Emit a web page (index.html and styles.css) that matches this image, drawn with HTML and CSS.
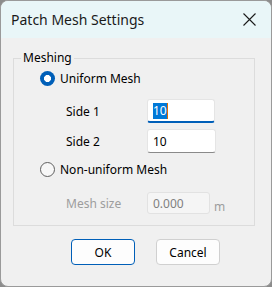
FILE: index.html
```html
<!DOCTYPE html>
<html lang="en">
<head>
    <meta charset="UTF-8">
    <title>Patch Mesh Settings</title>
    <link rel="stylesheet" href="styles.css">
</head>
<body>

<div class="window">
    <div class="titlebar">
        <span class="title">Patch Mesh Settings</span>
        <svg class="close" width="13" height="13" viewBox="0 0 13 13">
            <path d="M0.5 0.5 L12.5 12.5 M12.5 0.5 L0.5 12.5" stroke="#1b1b1b" stroke-width="1.1" fill="none"/>
        </svg>
    </div>

    <div class="content">
        <fieldset class="group">
            <legend>Meshing</legend>

            <div class="radio-row">
                <span class="radio checked"></span>
                <span class="radio-label">Uniform Mesh</span>
            </div>

            <div class="field-row first">
                <span class="field-label">Side 1</span>
                <div class="input focused"><span class="selected">10</span><span class="caret"></span></div>
            </div>

            <div class="field-row">
                <span class="field-label">Side 2</span>
                <div class="input">10</div>
            </div>

            <div class="radio-row second">
                <span class="radio"></span>
                <span class="radio-label">Non-uniform Mesh</span>
            </div>

            <div class="field-row mesh">
                <span class="field-label disabled">Mesh size</span>
                <div class="input inactive">0.000</div>
                <span class="unit">m</span>
            </div>
        </fieldset>

        <div class="buttons">
            <button class="btn default">OK</button>
            <button class="btn">Cancel</button>
        </div>
    </div>
</div>

</body>
</html>
```

FILE: styles.css
```css
/* Page and window frame */
body {
    margin: 0;
    background: #8c8c8c;
    font-family: 'Noto Sans', 'Liberation Sans', sans-serif;
    font-size: 12px;
    color: #000;
}

.window {
    width: 270px;
    height: 285px;
    border: 1px solid #9a9a9a;
    border-radius: 8px;
    overflow: hidden;
    background: #f0f0f0;
}

/* Title bar */
.titlebar {
    height: 37px;
    background: #e9f6f8;
    display: flex;
    align-items: center;
    justify-content: space-between;
    padding: 0 15px 0 10px;
}

.title {
    font-size: 14px;
    color: #1a1a1a;
    margin-top: -1px;
}

.close {
    display: block;
}

/* Group box */
.content {
    padding: 12px 0 0 12px;
}

.group {
    width: 240px;
    margin: 0;
    padding: 0 0 11px 26px;
    border: 1px solid #dcdcdc;
    box-sizing: border-box;
    width: 242px;
}

.group legend {
    margin-left: -19px;
    padding: 0 2px;
    line-height: 16px;
}

/* Radio buttons */
.radio-row {
    display: flex;
    align-items: center;
    height: 20px;
    margin-top: 2px;
}

.radio-row.second {
    margin-top: 6px;
}

.radio {
    width: 13px;
    height: 13px;
    border: 1px solid #5f5f5f;
    border-radius: 50%;
    background: #f7f7f7;
    box-sizing: content-box;
    margin-right: 5px;
}

.radio.checked {
    width: 15px;
    height: 15px;
    border: none;
    background: radial-gradient(circle, #fff 0 3.2px, #005fb8 3.8px);
}

/* Label + input rows */
.field-row {
    display: flex;
    align-items: center;
    margin-top: 6px;
    padding-left: 26px;
}

.field-row.first {
    margin-top: 11px;
}

.field-row.mesh {
    margin-top: 13px;
}

.field-label {
    width: 81px;
}

.field-label.disabled {
    color: #9d9d9d;
}

.input {
    width: 57px;
    height: 23px;
    padding: 0 5px;
    background: #fff;
    border: 1px solid #e5e5e5;
    border-bottom-color: #8a8a8a;
    border-radius: 3px;
    display: flex;
    align-items: center;
    box-sizing: content-box;
    height: 22px;
}

.input.focused {
    width: 56px;
    border-bottom: 2px solid #005fb8;
    height: 21px;
}

.input.inactive {
    width: 51px;
    height: 20px;
    background: #f5f5f5;
    border-color: #e2e2e2;
    color: #808080;
}

.selected {
    background: #0078d7;
    color: #fff;
    line-height: 16px;
}

.caret {
    width: 1px;
    height: 16px;
    background: #e06c00;
}

.unit {
    color: #9d9d9d;
    align-self: flex-end;
    margin-left: 4px;
    line-height: 14px;
}

/* Dialog buttons */
.buttons {
    display: flex;
    gap: 21px;
    padding: 13px 0 0 58px;
}

.btn {
    width: 64px;
    height: 26px;
    font-family: inherit;
    font-size: 12px;
    color: #000;
    background: #fdfdfd;
    border: 1px solid #d0d0d0;
    border-radius: 4px;
    padding: 0;
}

.btn.default {
    border-color: #005fb8;
}
```
